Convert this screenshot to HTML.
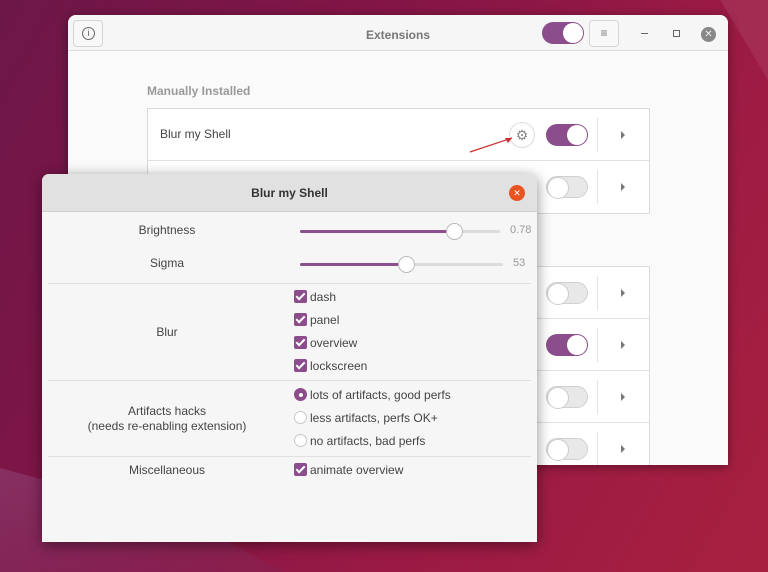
<!DOCTYPE html>
<html><head><style>
*{box-sizing:border-box;margin:0;padding:0}
html,body{width:768px;height:572px;overflow:hidden}
body{position:relative;font-family:"Liberation Sans",sans-serif;background:linear-gradient(120deg,#6c1748 0%,#821546 35%,#9a1a45 65%,#a8203f 100%)}
.abs{position:absolute}
.win{left:68px;top:15px;width:660px;height:450px;background:#fafafa;border-radius:8px 8px 0 0;box-shadow:0 2px 10px rgba(0,0,0,.4);overflow:hidden}
.hb{height:36px;background:#f6f6f6;border-bottom:1px solid #ddd;position:relative}
.btn{position:absolute;border:1px solid #d5d5d5;border-radius:4px;background:#f8f8f8}
.tog{position:absolute;width:42px;height:22px;border-radius:11px;background:#8b4d8b}
.tog::after{content:"";position:absolute;right:1px;top:1px;width:20px;height:20px;border-radius:50%;background:#fff}
.tog.off{background:#e8e8e8;border:1px solid #d0d0d0}
.tog.off::after{left:0;right:auto;top:0;border:1px solid #ccc}
.list{position:absolute;left:79px;width:503px;background:#fff;border:1px solid #dadada}
.row{height:52px;border-bottom:1px solid #e2e2e2;position:relative;font-size:12px;color:#444}
.row:last-child{border-bottom:none}
.sep{position:absolute;left:449px;top:9px;height:34px;border-left:1px solid #e2e2e2}
.arr{position:absolute;left:473px;top:22px;width:0;height:0;border-left:4px solid #777;border-top:4px solid transparent;border-bottom:4px solid transparent}
.dlg{left:42px;top:174px;width:495px;height:368px;background:#f6f6f6;border-radius:7px 7px 0 0;box-shadow:0 3px 14px rgba(0,0,0,.45);overflow:hidden}
.dh{height:38px;background:#e1e1e1;border-bottom:1px solid #cfcfcf;text-align:center;line-height:38px;font-weight:bold;font-size:12px;color:#333}
.lab{position:absolute;width:250px;text-align:center;font-size:12px;color:#444}
.opt{position:absolute;left:252px;font-size:12px;color:#444;line-height:14px}
.cb{display:inline-block;width:13px;height:13px;background:#8b4d8b;border-radius:2px;vertical-align:-2px;margin-right:3px;position:relative}
.cb::after{content:"";position:absolute;left:4px;top:1px;width:3px;height:7px;border:solid #fff;border-width:0 2px 2px 0;transform:rotate(45deg)}
.rd{display:inline-block;width:13px;height:13px;border-radius:50%;border:1px solid #c8c8c8;background:#fff;vertical-align:-2px;margin-right:3px;position:relative}
.rd.on{background:#8b4d8b;border-color:#8b4d8b}
.rd.on::after{content:"";position:absolute;left:3.5px;top:3.5px;width:4px;height:4px;border-radius:50%;background:#fff}
.hr{position:absolute;left:6px;right:6px;border-top:1px solid #e0e0e0}
.trk{position:absolute;height:3px;background:#dcdcdc;border-radius:2px}
.fill{position:absolute;left:0;top:0;height:3px;background:#8b4d8b;border-radius:2px}
.knob{position:absolute;width:17px;height:17px;border-radius:50%;background:#fff;border:1px solid #bbb;top:-7px}
</style></head><body>
<div class="abs" style="left:0;top:440px;width:300px;height:140px;background:linear-gradient(160deg,rgba(150,80,130,.5),rgba(110,40,90,.2));clip-path:polygon(0 20%,60% 55%,100% 100%,0 100%)"></div>
<div class="abs" style="left:700px;top:0;width:68px;height:80px;background:rgba(255,255,255,.08);clip-path:polygon(30% 0,100% 0,100% 100%)"></div>

<div class="abs win">
 <div class="hb">
  <div class="btn" style="left:5px;top:5px;width:30px;height:27px"><div style="position:absolute;left:8px;top:6px;width:13px;height:13px;border:1px solid #666;border-radius:50%;font-size:9px;text-align:center;line-height:11px;color:#555">i</div></div>
  <div style="position:absolute;left:0;right:0;top:13px;text-align:center;font-size:12px;font-weight:bold;color:#777">Extensions</div>
  <div class="tog" style="left:474px;top:7px"></div>
  <div class="btn" style="left:521px;top:5px;width:30px;height:27px;text-align:center;line-height:24px;color:#777;font-size:12px">≡</div>
  <div style="position:absolute;left:573px;top:18px;width:7px;border-top:1px solid #666"></div>
  <div style="position:absolute;left:605px;top:15px;width:7px;height:7px;border:1px solid #666"></div>
  <div style="position:absolute;left:633px;top:12px;width:15px;height:15px;border-radius:50%;background:#888;color:#eee;font-size:10px;text-align:center;line-height:15px">✕</div>
 </div>
 <div style="position:absolute;left:79px;top:69px;font-size:12px;font-weight:bold;color:#999">Manually Installed</div>
 <div class="list" style="top:93px">
  <div class="row"><span style="position:absolute;left:12px;top:18px">Blur my Shell</span>
   <div style="position:absolute;left:361px;top:13px;width:26px;height:26px;border-radius:50%;border:1px solid #ddd;text-align:center;line-height:24px;color:#888;font-size:14px">⚙</div>
   <div class="tog" style="left:398px;top:15px"></div><div class="sep"></div><div class="arr"></div></div>
  <div class="row"><div class="tog off" style="left:398px;top:15px"></div><div class="sep"></div><div class="arr"></div></div>
 </div>
 <div class="list" style="top:251px">
  <div class="row"><div class="tog off" style="left:398px;top:15px"></div><div class="sep"></div><div class="arr"></div></div>
  <div class="row"><div class="tog" style="left:398px;top:15px"></div><div class="sep"></div><div class="arr"></div></div>
  <div class="row"><div class="tog off" style="left:398px;top:15px"></div><div class="sep"></div><div class="arr"></div></div>
  <div class="row"><div class="tog off" style="left:398px;top:15px"></div><div class="sep"></div><div class="arr"></div></div>
 </div>
 <svg style="position:absolute;left:400px;top:118px" width="50" height="22"><line x1="2" y1="19" x2="44" y2="5" stroke="#c83030" stroke-width="1.3"/><path d="M44 5 L37 5 L40 10 Z" fill="#c83030"/></svg>
</div>

<div class="abs dlg">
 <div class="dh">Blur my Shell<div style="position:absolute;right:12px;top:11px;width:16px;height:16px;border-radius:50%;background:#e95420;color:#fff;font-size:9px;line-height:16px;text-align:center;font-weight:normal">✕</div></div>
 <div class="lab" style="top:49px">Brightness</div>
 <div class="trk" style="left:258px;top:56px;width:200px"><div class="fill" style="width:155px"></div><div class="knob" style="left:146px"></div></div>
 <div style="position:absolute;left:468px;top:50px;font-size:11px;color:#999">0.78</div>
 <div class="lab" style="top:82px">Sigma</div>
 <div class="trk" style="left:258px;top:89px;width:203px"><div class="fill" style="width:107px"></div><div class="knob" style="left:98px"></div></div>
 <div style="position:absolute;left:471px;top:83px;font-size:11px;color:#999">53</div>
 <div class="hr" style="top:109px"></div>
 <div class="lab" style="top:151px">Blur</div>
 <div class="opt" style="top:116px"><span class="cb"></span>dash</div>
 <div class="opt" style="top:139px"><span class="cb"></span>panel</div>
 <div class="opt" style="top:162px"><span class="cb"></span>overview</div>
 <div class="opt" style="top:185px"><span class="cb"></span>lockscreen</div>
 <div class="hr" style="top:206px"></div>
 <div class="lab" style="top:230px;line-height:15px">Artifacts hacks<br>(needs re-enabling extension)</div>
 <div class="opt" style="top:214px"><span class="rd on"></span>lots of artifacts, good perfs</div>
 <div class="opt" style="top:237px"><span class="rd"></span>less artifacts, perfs OK+</div>
 <div class="opt" style="top:260px"><span class="rd"></span>no artifacts, bad perfs</div>
 <div class="hr" style="top:282px"></div>
 <div class="lab" style="top:289px">Miscellaneous</div>
 <div class="opt" style="top:289px"><span class="cb"></span>animate overview</div>
</div>
</body></html>
